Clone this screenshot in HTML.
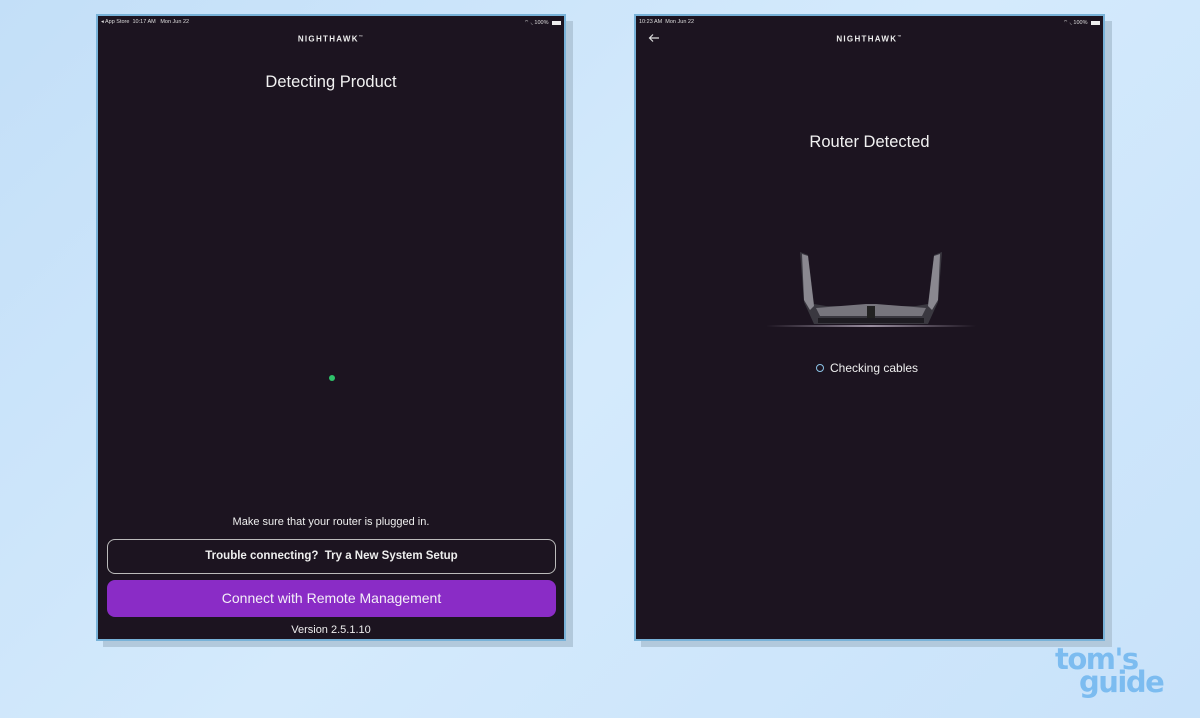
<!DOCTYPE html>
<html><head><meta charset="utf-8"><style>
*{margin:0;padding:0;box-sizing:border-box}
body{width:1200px;height:718px;overflow:hidden;position:relative;font-family:"Liberation Sans",sans-serif;
background:linear-gradient(135deg,#c3dff8 0%,#d4eafc 50%,#c8e2fa 100%)}
.shadow{position:absolute;background:#b2c9dc}
.scr{position:absolute;background:#1c1420;border:2px solid #78b2d8;color:#fff}
.sb{position:absolute;top:3px;font-size:5.5px;color:#ddd}
.logo{position:absolute;top:33px;width:100%;text-align:center;font-size:8px;letter-spacing:1.3px;font-weight:bold;color:#eee}
.title{position:absolute;width:100%;text-align:center;font-size:16.5px;color:#f2f2f2}
.batt{display:inline-block;width:9px;height:4px;background:#eee;vertical-align:middle;margin-left:2px}
</style></head><body>
<div class="shadow" style="left:103px;top:21px;width:470px;height:626px"></div>
<div class="shadow" style="left:641px;top:21px;width:471px;height:626px"></div>

<div class="scr" style="left:96px;top:14px;width:470px;height:627px">
<div class="sb" style="left:3px">◂ App Store &nbsp;10:17 AM &nbsp; Mon Jun 22</div>
<div class="sb" style="right:3px">⌔ ◟ 100% <span class="batt"></span></div>
<div class="logo" style="top:18px">NIGHTHAWK<sup style="font-size:4px">™</sup></div>
<div class="title" style="top:57px">Detecting Product</div>
<div style="position:absolute;left:231px;top:359px;width:6px;height:6px;border-radius:50%;background:#2ec26a"></div>
<div style="position:absolute;top:500px;width:100%;text-align:center;font-size:11px;color:#eee">Make sure that your router is plugged in.</div>
<div style="position:absolute;left:9px;top:523px;width:449px;height:35px;border:1px solid #bbb;border-radius:8px;text-align:center;line-height:33px;font-size:11.5px;font-weight:bold;color:#eee">Trouble connecting?&nbsp; Try a New System Setup</div>
<div style="position:absolute;left:9px;top:564px;width:449px;height:37px;background:#8a2cc6;border-radius:8px;text-align:center;line-height:37px;font-size:14px;color:#f4f0f8">Connect with Remote Management</div>
<div style="position:absolute;top:608px;width:100%;text-align:center;font-size:11px;color:#eee">Version 2.5.1.10</div>
</div>

<div class="scr" style="left:634px;top:14px;width:471px;height:627px">
<div class="sb" style="left:3px">10:23 AM &nbsp;Mon Jun 22</div>
<div class="sb" style="right:3px">⌔ ◟ 100% <span class="batt"></span></div>
<svg style="position:absolute;left:12px;top:17px" width="12" height="10" viewBox="0 0 12 10"><path d="M11 5H2M5 1.5L1.5 5L5 8.5" stroke="#ddd" stroke-width="1.2" fill="none"/></svg>
<div class="logo" style="top:18px">NIGHTHAWK<sup style="font-size:4px">™</sup></div>
<div class="title" style="top:117px">Router Detected</div>
<svg style="position:absolute;left:130px;top:234px" width="210" height="80" viewBox="0 0 210 80">
<defs><linearGradient id="g" x1="0" x2="1"><stop offset="0" stop-color="#1c1420"/><stop offset=".5" stop-color="#9a8fa0"/><stop offset="1" stop-color="#1c1420"/></linearGradient></defs>
<rect x="0" y="75" width="210" height="2" fill="url(#g)"/>
<path d="M34 2 L42 5 L48 54 L60 56 L150 56 L162 54 L168 5 L176 2 L172 52 L162 74 L48 74 L38 52 Z" fill="#3a3840"/>
<path d="M36 4 L42 6 L48 56 L44 60 L38 50 Z" fill="#8a8890"/>
<path d="M174 4 L168 6 L162 56 L166 60 L172 50 Z" fill="#8a8890"/>
<path d="M50 58 L100 54 L110 54 L160 58 L156 66 L54 66 Z" fill="#77757d"/>
<rect x="101" y="56" width="8" height="12" fill="#222"/>
<rect x="52" y="68" width="106" height="5" fill="#1e1c22"/>
</svg>
<div style="position:absolute;left:180px;top:348px;width:8px;height:8px;border:1.3px solid #8cc4e6;border-radius:50%"></div>
<div style="position:absolute;left:194px;top:345px;font-size:12px;color:#eee">Checking cables</div>
</div>

<div style="position:absolute;left:1055px;top:648px;font-family:'DejaVu Sans',sans-serif;font-weight:bold;color:#7cbcf0;font-size:29px;line-height:23px;letter-spacing:-1.5px">tom's<br><span style="margin-left:24px">guide</span></div>
</body></html>
